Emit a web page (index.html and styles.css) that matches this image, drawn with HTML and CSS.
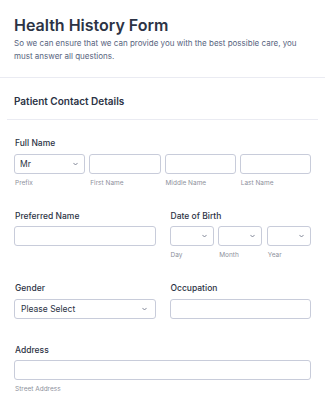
FILE: index.html
```html
<!DOCTYPE html>
<html>
<head>
<meta charset="utf-8">
<link rel="stylesheet" href="styles.css">
</head>
<body>
<div class="header">
  <h1 class="title">Health History Form</h1>
  <p class="subtitle">So we can ensure that we can provide you with the best possible care, you must answer all questions.</p>
</div>
<div class="section">
  <h2 class="section-title">Patient Contact Details</h2>
</div>
<div class="form">
  <div class="field">
    <div class="label">Full Name</div>
    <div class="grid4">
      <div class="sub">
        <div class="control select"><span class="value">Mr</span><svg class="chev" viewBox="0 0 6 4"><polyline points="0.5,0.7 3,3.2 5.5,0.7"/></svg></div>
        <div class="sublabel">Prefix</div>
      </div>
      <div class="sub">
        <div class="control"></div>
        <div class="sublabel">First Name</div>
      </div>
      <div class="sub">
        <div class="control"></div>
        <div class="sublabel">Middle Name</div>
      </div>
      <div class="sub">
        <div class="control"></div>
        <div class="sublabel">Last Name</div>
      </div>
    </div>
  </div>

  <div class="grid2">
    <div class="field">
      <div class="label">Preferred Name</div>
      <div class="control"></div>
    </div>
    <div class="field">
      <div class="label">Date of Birth</div>
      <div class="grid3">
        <div class="sub">
          <div class="control select"><span class="value"></span><svg class="chev" viewBox="0 0 6 4"><polyline points="0.5,0.7 3,3.2 5.5,0.7"/></svg></div>
          <div class="sublabel">Day</div>
        </div>
        <div class="sub">
          <div class="control select"><span class="value"></span><svg class="chev" viewBox="0 0 6 4"><polyline points="0.5,0.7 3,3.2 5.5,0.7"/></svg></div>
          <div class="sublabel">Month</div>
        </div>
        <div class="sub">
          <div class="control select"><span class="value"></span><svg class="chev" viewBox="0 0 6 4"><polyline points="0.5,0.7 3,3.2 5.5,0.7"/></svg></div>
          <div class="sublabel">Year</div>
        </div>
      </div>
    </div>
  </div>

  <div class="grid2">
    <div class="field">
      <div class="label">Gender</div>
      <div class="control select wide"><span class="value">Please Select</span><svg class="chev" viewBox="0 0 6 4"><polyline points="0.5,0.7 3,3.2 5.5,0.7"/></svg></div>
    </div>
    <div class="field">
      <div class="label">Occupation</div>
      <div class="control"></div>
    </div>
  </div>

  <div class="field spaced">
    <div class="label">Address</div>
    <div class="control"></div>
    <div class="sublabel">Street Address</div>
  </div>
</div>
</body>
</html>
```

FILE: styles.css
```css
* { box-sizing: border-box; }
html, body { margin: 0; padding: 0; background: #fff; }
body {
  font-family: Inter, "Noto Sans", sans-serif;
  color: #2c3345;
  width: 325px;
  overflow: hidden;
}
.header {
  padding: 14px 14px 14px 14px;
  border-bottom: 1px solid #eaebf2;
}
.title {
  margin: 0 0 1px 0;
  font-size: 16px;
  line-height: 22px;
  font-weight: 600;
  color: #2c3345;
}
.subtitle {
  margin: 0;
  font-size: 8px;
  line-height: 13px;
  color: #57647e;
}
.section {
  margin: 0 7px;
  padding: 17px 7px 12px 7px;
  border-bottom: 1px solid #eaebf2;
}
.section-title {
  margin: 0;
  font-size: 10px;
  line-height: 12px;
  font-weight: 600;
  color: #2c3345;
}
.form {
  padding: 18px 14px 0 14px;
  display: flex;
  flex-direction: column;
  gap: 23px;
}
.spaced { margin-top: 3px; }
.label {
  font-size: 8.5px;
  line-height: 11px;
  font-weight: 500;
  color: #2c3345;
  margin-bottom: 4.5px;
  padding-left: 1px;
}
.grid4 {
  display: grid;
  grid-template-columns: repeat(4, 1fr);
  gap: 4px;
}
.grid2 {
  display: grid;
  grid-template-columns: 1fr 1fr;
  gap: 14px;
}
.grid3 {
  display: grid;
  grid-template-columns: repeat(3, 1fr);
  gap: 4.5px;
}
.control {
  height: 20px;
  border: 1px solid #c8ccda;
  border-radius: 3px;
  background: #fff;
  display: flex;
  align-items: center;
  padding: 0 6px 0 5px;
}
.select { justify-content: space-between; }
.select.wide { padding-left: 6px; padding-right: 8px; }
.value {
  font-size: 8.5px;
  color: #2c3345;
}
.chev {
  width: 5px;
  height: 4px;
  fill: none;
  stroke: #6b7285;
  stroke-width: 1;
}
.sublabel {
  margin-top: 5px;
  font-size: 6.5px;
  line-height: 9px;
  color: #8e919c;
  padding-left: 1px;
}
```
